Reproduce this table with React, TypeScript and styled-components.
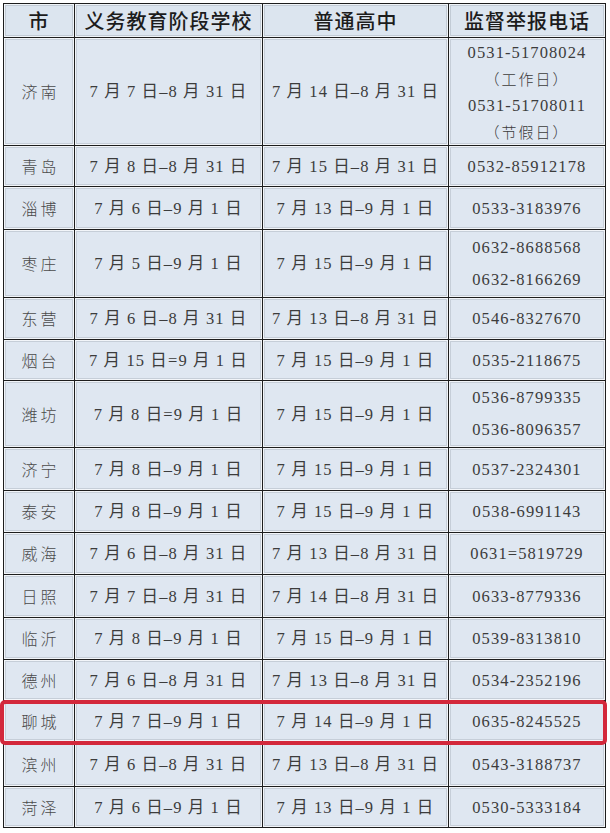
import React from "react";
import styled, { createGlobalStyle } from "styled-components";

const Global = createGlobalStyle`
  html, body { margin: 0; padding: 0; background: #ffffff; }
  body { width: 610px; height: 833px; overflow: hidden; }
`;

const Page = styled.div`
  padding: 3px 0 0 3px;
`;

const Frame = styled.div`
  position: relative;
  width: 602px;
`;

const Table = styled.table`
  width: 602px;
  border-collapse: collapse;
  table-layout: fixed;
  border: 1.5px solid #1d1d1d;
`;

const Col = styled.col<{ $w: number }>`
  width: ${(p) => p.$w}px;
`;

const Row = styled.tr<{ $h: number }>`
  height: ${(p) => p.$h}px;
`;

const HeadCell = styled.th`
  border: 1.5px solid #1d1d1d;
  background: #dce5ef;
  box-shadow: inset 0 0 0 1px #f0f4f8, inset 0 0 0 2px #c2cbd5;
  padding: 0;
  text-align: center;
  vertical-align: middle;
  font-family: "Noto Sans CJK SC", "Noto Sans", sans-serif;
  font-weight: 500;
  font-size: 20px;
  letter-spacing: 1px;
  color: #1c1c1c;
`;

const Cell = styled.td`
  border: 1.5px solid #1d1d1d;
  background: #dfe7f1;
  box-shadow: inset 0 0 0 1px #f2f5f9, inset 0 0 0 2px #c6ced8;
  padding: 0;
  text-align: center;
  vertical-align: middle;
  font-family: "Liberation Serif", "Noto Sans CJK SC", serif;
  font-size: 16.5px;
  letter-spacing: 1.1px;
  color: #3c3c3c;
  line-height: 27px;
`;

const CityCell = styled(Cell)`
  font-family: "Noto Sans CJK SC", sans-serif;
  font-size: 16px;
  letter-spacing: 3px;
  text-indent: 3px;
  font-weight: 300;
  color: #4a4a4a;
`;

const PhoneLine = styled.div<{ $gap?: number }>`
  line-height: ${(p) => p.$gap ?? 27}px;
`;

const Note = styled.div`
  font-family: "Noto Sans CJK SC", sans-serif;
  font-size: 15px;
  font-weight: 300;
  letter-spacing: 2px;
  line-height: 26px;
`;

const Highlight = styled.div`
  position: absolute;
  left: -3px;
  top: 697px;
  width: 599px;
  height: 37px;
  border: 4px solid #d3283b;
  border-radius: 5px;
  pointer-events: none;
`;

type R = {
  city: string;
  a: string;
  b: string;
  phones: React.ReactNode;
  h: number;
};

const rows: R[] = [
  {
    city: "济南",
    a: "7 月 7 日–8 月 31 日",
    b: "7 月 14 日–8 月 31 日",
    phones: (
      <>
        <PhoneLine>0531-51708024</PhoneLine>
        <Note>（工作日）</Note>
        <PhoneLine>0531-51708011</PhoneLine>
        <Note>（节假日）</Note>
      </>
    ),
    h: 108,
  },
  { city: "青岛", a: "7 月 8 日–8 月 31 日", b: "7 月 15 日–8 月 31 日", phones: "0532-85912178", h: 41 },
  { city: "淄博", a: "7 月 6 日–9 月 1 日", b: "7 月 13 日–9 月 1 日", phones: "0533-3183976", h: 43 },
  {
    city: "枣庄",
    a: "7 月 5 日–9 月 1 日",
    b: "7 月 15 日–9 月 1 日",
    phones: (
      <>
        <PhoneLine $gap={32}>0632-8688568</PhoneLine>
        <PhoneLine $gap={32}>0632-8166269</PhoneLine>
      </>
    ),
    h: 68,
  },
  { city: "东营", a: "7 月 6 日–8 月 31 日", b: "7 月 13 日–8 月 31 日", phones: "0546-8327670", h: 42 },
  { city: "烟台", a: "7 月 15 日=9 月 1 日", b: "7 月 15 日–9 月 1 日", phones: "0535-2118675", h: 41 },
  {
    city: "潍坊",
    a: "7 月 8 日=9 月 1 日",
    b: "7 月 15 日–9 月 1 日",
    phones: (
      <>
        <PhoneLine $gap={32}>0536-8799335</PhoneLine>
        <PhoneLine $gap={32}>0536-8096357</PhoneLine>
      </>
    ),
    h: 67,
  },
  { city: "济宁", a: "7 月 8 日–9 月 1 日", b: "7 月 15 日–9 月 1 日", phones: "0537-2324301", h: 43 },
  { city: "泰安", a: "7 月 8 日–9 月 1 日", b: "7 月 15 日–9 月 1 日", phones: "0538-6991143", h: 42 },
  { city: "威海", a: "7 月 6 日–8 月 31 日", b: "7 月 13 日–8 月 31 日", phones: "0631=5819729", h: 42 },
  { city: "日照", a: "7 月 7 日–8 月 31 日", b: "7 月 14 日–8 月 31 日", phones: "0633-8779336", h: 43 },
  { city: "临沂", a: "7 月 8 日–9 月 1 日", b: "7 月 15 日–9 月 1 日", phones: "0539-8313810", h: 42 },
  { city: "德州", a: "7 月 6 日–8 月 31 日", b: "7 月 13 日–8 月 31 日", phones: "0534-2352196", h: 41 },
  { city: "聊城", a: "7 月 7 日–9 月 1 日", b: "7 月 14 日–9 月 1 日", phones: "0635-8245525", h: 41 },
  { city: "滨州", a: "7 月 6 日–8 月 31 日", b: "7 月 13 日–8 月 31 日", phones: "0543-3188737", h: 45 },
  { city: "菏泽", a: "7 月 6 日–9 月 1 日", b: "7 月 13 日–9 月 1 日", phones: "0530-5333184", h: 41 },
];

export default function App() {
  return (
    <Page>
      <Global />
      <Frame>
        <Table>
          <colgroup>
            <Col $w={71} />
            <Col $w={188} />
            <Col $w={186} />
            <Col $w={157} />
          </colgroup>
          <thead>
            <Row $h={34}>
              <HeadCell>市</HeadCell>
              <HeadCell>义务教育阶段学校</HeadCell>
              <HeadCell>普通高中</HeadCell>
              <HeadCell>监督举报电话</HeadCell>
            </Row>
          </thead>
          <tbody>
            {rows.map((r) => (
              <Row key={r.city} $h={r.h}>
                <CityCell>{r.city}</CityCell>
                <Cell>{r.a}</Cell>
                <Cell>{r.b}</Cell>
                <Cell>{r.phones}</Cell>
              </Row>
            ))}
          </tbody>
        </Table>
        <Highlight />
      </Frame>
    </Page>
  );
}
